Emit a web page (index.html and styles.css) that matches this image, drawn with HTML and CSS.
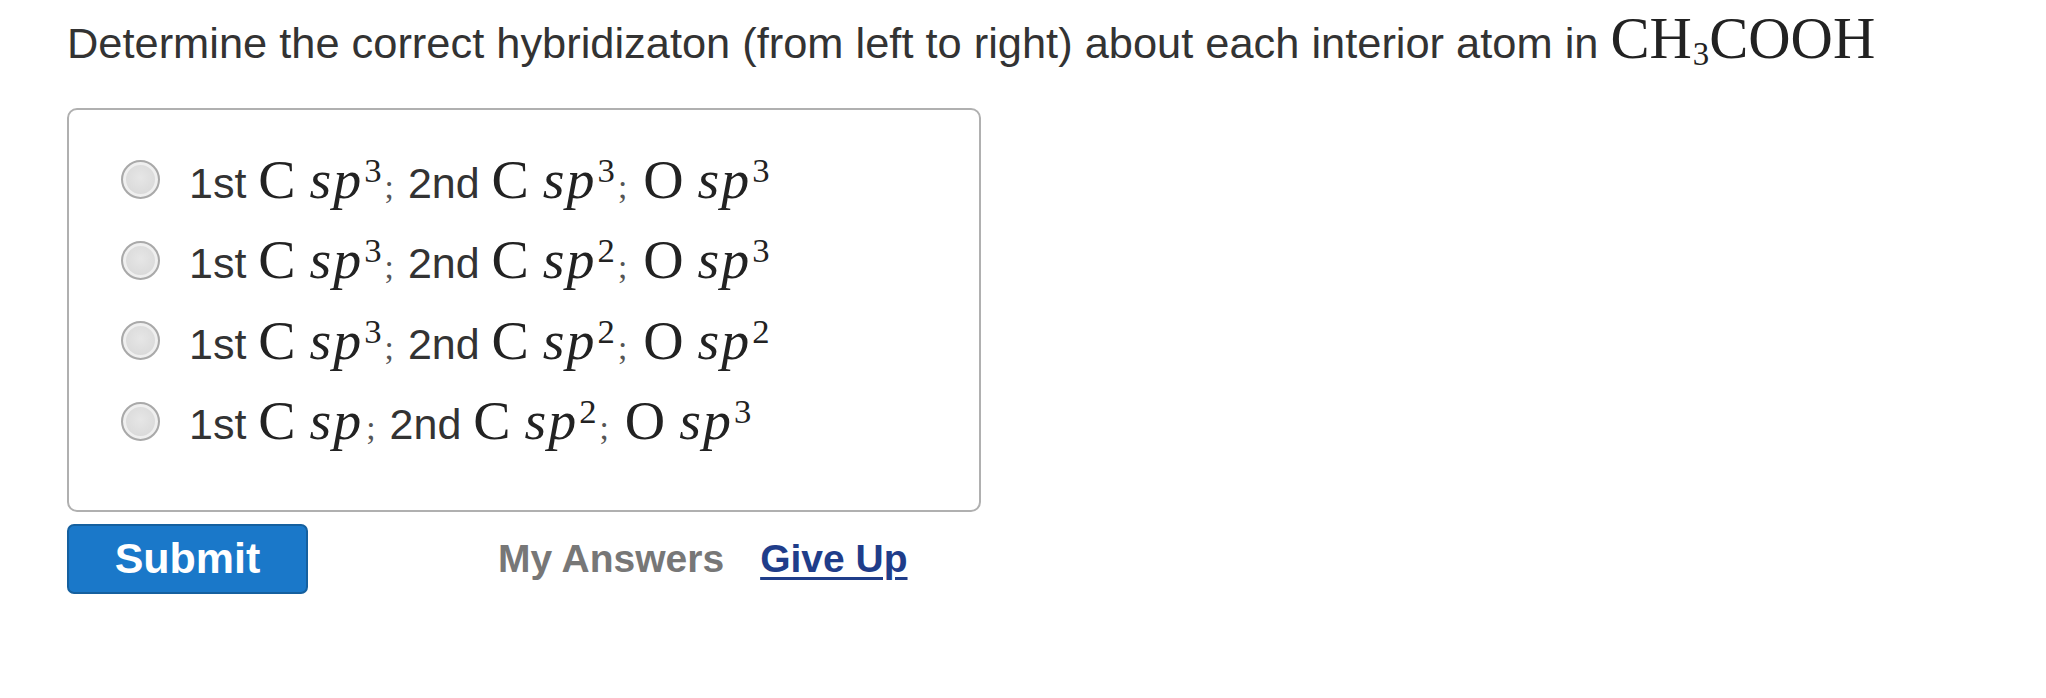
FILE: index.html
```html
<!DOCTYPE html>
<html>
<head>
<meta charset="utf-8">
<link rel="stylesheet" href="styles.css">
</head>
<body>
<div class="page">
  <p class="question">Determine the correct hybridizaton (from left to right) about each interior atom in <span class="math big">CH<span class="sub">3</span>COOH</span></p>
  <div class="choices">
    <label class="choice"><span class="radio"></span><span class="text">1st <span class="math">C <i>sp</i><span class="sup">3</span><span class="semi">;</span></span> 2nd <span class="math">C <i>sp</i><span class="sup">3</span><span class="semi">;</span> O <i>sp</i><span class="sup">3</span></span></span></label>
    <label class="choice"><span class="radio"></span><span class="text">1st <span class="math">C <i>sp</i><span class="sup">3</span><span class="semi">;</span></span> 2nd <span class="math">C <i>sp</i><span class="sup">2</span><span class="semi">;</span> O <i>sp</i><span class="sup">3</span></span></span></label>
    <label class="choice"><span class="radio"></span><span class="text">1st <span class="math">C <i>sp</i><span class="sup">3</span><span class="semi">;</span></span> 2nd <span class="math">C <i>sp</i><span class="sup">2</span><span class="semi">;</span> O <i>sp</i><span class="sup">2</span></span></span></label>
    <label class="choice"><span class="radio"></span><span class="text">1st <span class="math">C <i>sp</i><span class="semi">;</span></span> 2nd <span class="math">C <i>sp</i><span class="sup">2</span><span class="semi">;</span> O <i>sp</i><span class="sup">3</span></span></span></label>
  </div>
  <div class="actions">
    <button class="submit" type="button">Submit</button>
    <span class="my-answers">My Answers</span>
    <a class="give-up" href="#">Give Up</a>
  </div>
</div>
</body>
</html>
```

FILE: styles.css
```css
html, body {
  margin: 0;
  padding: 0;
  background: #ffffff;
}

.page {
  padding: 0 0 0 67px;
  font-family: "Liberation Sans", Arial, sans-serif;
  color: #333333;
}

.question {
  margin: 0;
  padding-top: 10px;
  font-size: 43.4px;
  line-height: 50px;
  white-space: nowrap;
}

.math {
  font-family: "Liberation Serif", "Times New Roman", serif;
  font-size: 1.3em;
  line-height: 1;
  color: #222222;
}

.math.big {
  font-size: 1.35em;
}

.math i {
  font-style: italic;
  letter-spacing: 2px;
}

.sub {
  font-size: 0.56em;
  position: relative;
  top: 0.22em;
  margin-left: 1px;
}

.sup {
  font-size: 0.62em;
  vertical-align: 0.46em;
  line-height: 0;
  margin-left: 1px;
}

.semi {
  font-size: 0.6em;
  margin-left: 3px;
  margin-right: 2px;
  color: #555555;
}

.choices {
  margin-top: 39px;
  box-sizing: border-box;
  width: 914px;
  height: 404px;
  border: 2px solid #b0b0b0;
  border-radius: 10px;
  padding: 30px 0 0 52px;
}

.choice {
  display: flex;
  align-items: center;
  height: 80.5px;
  font-size: 43px;
  white-space: nowrap;
  cursor: pointer;
}

.radio {
  flex: none;
  box-sizing: border-box;
  width: 39px;
  height: 39px;
  border-radius: 50%;
  border: 2px solid #a9a9a9;
  background: radial-gradient(circle at 50% 45%, #e6e6e6 0%, #dcdcdc 55%, #cfcfcf 100%);
  box-shadow: inset 0 0 0 3px #efefef;
  margin-right: 29px;
}

.text {
  line-height: 1;
}

.actions {
  display: flex;
  align-items: center;
  margin-top: 12px;
  height: 70px;
}

.submit {
  box-sizing: border-box;
  width: 241px;
  height: 70px;
  background: #1a78c9;
  border: 2px solid #15609f;
  border-radius: 7px;
  color: #ffffff;
  font-family: "Liberation Sans", Arial, sans-serif;
  font-weight: bold;
  font-size: 43px;
  padding: 0;
  margin-right: 190px;
}

.my-answers {
  font-weight: bold;
  font-size: 39px;
  color: #777777;
  margin-right: 36px;
}

.give-up {
  font-weight: bold;
  font-size: 39px;
  color: #1f3d8a;
  text-decoration: underline;
  text-decoration-thickness: 3px;
  text-underline-offset: 5px;
}
```
